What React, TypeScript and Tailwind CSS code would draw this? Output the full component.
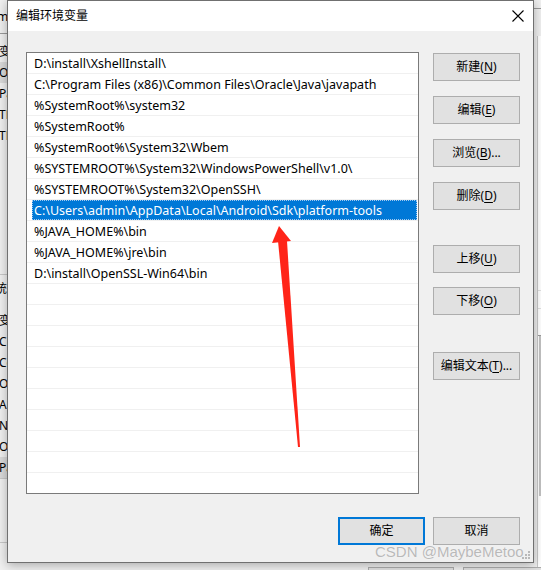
import React from "react";

const paths = [
  "D:\\install\\XshellInstall\\",
  "C:\\Program Files (x86)\\Common Files\\Oracle\\Java\\javapath",
  "%SystemRoot%\\system32",
  "%SystemRoot%",
  "%SystemRoot%\\System32\\Wbem",
  "%SYSTEMROOT%\\System32\\WindowsPowerShell\\v1.0\\",
  "%SYSTEMROOT%\\System32\\OpenSSH\\",
  "C:\\Users\\admin\\AppData\\Local\\Android\\Sdk\\platform-tools",
  "%JAVA_HOME%\\bin",
  "%JAVA_HOME%\\jre\\bin",
  "D:\\install\\OpenSSL-Win64\\bin",
];

const SELECTED = 7;
const TOTAL_ROWS = 21;

const Btn = ({ label, accel, tail, className = "" }: { label: string; accel?: string; tail?: string; className?: string }) => (
  <div
    className={
      "h-[28px] w-[87px] flex items-center justify-center bg-[#e1e1e1] border border-[#adadad] text-[12px] text-black " +
      className
    }
  >
    <span>{label}</span>
    {accel && (
      <span>
        (<span className="underline underline-offset-2">{accel}</span>){tail}
      </span>
    )}
  </div>
);

// window behind the dialog, only a few pixels of it show
const BackStrip = () => {
  const top = ["变", "Or", "Pa", "TE", "TM"];
  const bottom = ["变", "CL", "Co", "Or", "A", "NI", "OS", "Pa"];
  return (
    <div className="absolute left-0 top-0 w-[7px] h-full overflow-hidden flex flex-col text-[12px] text-black">
      <div className="h-[33px] leading-[33px] -ml-[3px]">m</div>
      <div className="h-px bg-[#9a9a9a]" />
      <div className="h-[7px]" />
      {top.map((t, i) => (
        <div key={i} className={"h-[21px] leading-[21px] -ml-[1px] " + (i === 1 ? "bg-[#dadada]" : "")}>
          {t}
        </div>
      ))}
      <div className="h-[128px]" />
      <div className="h-px bg-[#c8c8c8]" />
      <div className="h-[27px] leading-[27px] -ml-[5px]">统</div>
      <div className="h-[8px]" />
      {bottom.map((t, i) => (
        <div key={i} className={"h-[21px] leading-[21px] -ml-[1px] " + (i === 7 ? "bg-[#dadada]" : "")}>
          {t}
        </div>
      ))}
      <div className="h-px bg-[#c8c8c8]" />
      <div className="h-[63px]" />
      <div className="h-px bg-[#c8c8c8]" />
    </div>
  );
};

const RightStrip = () => (
  <div className="absolute right-0 top-0 w-[7px] h-full overflow-hidden flex flex-col">
    <div className="h-[8px]" />
    <div className="h-px bg-[#9a9a9a]" />
    <div className="h-[27px]" />
    <div className="flex-1 ml-[3px] border-l border-[#c8c8c8] bg-white flex flex-col">
      <div className="h-[236px]" />
      <div className="h-[19px] border-b border-[#e0e0e0]" />
      <div className="h-[18px] border-b border-[#e0e0e0]" />
      <div className="h-[27px] border-b border-[#9a9a9a]" />
      <div className="h-[160px] bg-[#c2c2c2] ml-[1px]" />
    </div>
  </div>
);

export default function App() {
  return (
    <div className="relative w-[541px] h-[570px] overflow-hidden bg-[#f0f0f0] font-['Noto_Sans','Noto_Sans_CJK_SC',sans-serif]">
      <BackStrip />
      <RightStrip />

      {/* buttons of the window behind */}
      <div className="absolute left-[368px] top-[567px] w-[86px] h-[10px] border border-[#adadad] bg-[#e1e1e1]" />
      <div className="absolute left-[463px] top-[567px] w-[90px] h-[10px] border border-[#adadad] bg-[#e1e1e1]" />

      {/* dialog */}
      <div className="absolute left-[7px] top-0 w-[527px] h-[563px] border border-[#707070] bg-[#f0f0f0] flex flex-col shadow-[0_2px_10px_rgba(0,0,0,0.3)]">
        <div className="h-[30px] bg-white flex items-center justify-between pl-[8px] pr-[8px]">
          <span className="text-[12px] text-black">编辑环境变量</span>
          <svg width="12" height="12" viewBox="0 0 12 12" className="mr-[1px]">
            <path d="M0.5 0.5 L11.5 11.5 M11.5 0.5 L0.5 11.5" stroke="#000" strokeWidth="1.1" />
          </svg>
        </div>

        <div className="flex-1 flex flex-col pl-[18px] pr-[13px] pt-[21px]">
          <div className="flex">
            <div className="w-[393px] h-[442px] border border-[#7a7a7a] bg-white overflow-hidden">
              {Array.from({ length: TOTAL_ROWS }).map((_, i) => {
                const text = paths[i];
                const sel = i === SELECTED;
                return (
                  <div key={i} className="h-[21px] border-b border-[#f0f0f0] flex">
                    {sel ? (
                      <div className="ml-[5px] w-[385px] h-full bg-[#0078d7] outline outline-1 outline-dotted outline-[#a3c9ef] -outline-offset-1 flex items-center pl-[2px] pt-[2px] text-[12.5px] text-white whitespace-nowrap">
                        {text}
                      </div>
                    ) : (
                      <div className="pl-[7px] pt-[2px] flex items-center text-[12.5px] text-black whitespace-nowrap">{text}</div>
                    )}
                  </div>
                );
              })}
            </div>

            <div className="ml-[14px] w-[87px] flex flex-col">
              <Btn label="新建" accel="N" className="mt-[1px]" />
              <Btn label="编辑" accel="E" className="mt-[15px]" />
              <Btn label="浏览" accel="B" tail="..." className="mt-[15px]" />
              <Btn label="删除" accel="D" className="mt-[15px]" />
              <Btn label="上移" accel="U" className="mt-[35px]" />
              <Btn label="下移" accel="O" className="mt-[14px]" />
              <Btn label="编辑文本" accel="T" tail="..." className="mt-[37px]" />
            </div>
          </div>

          <div className="flex justify-end mt-[23px]">
            <div className="h-[28px] w-[87px] flex items-center justify-center bg-[#e1e1e1] border-2 border-[#0078d7] text-[12px] text-black">
              确定
            </div>
            <Btn label="取消" className="ml-[8px]" />
          </div>
        </div>

        {/* resize grip */}
        <svg width="10" height="10" viewBox="0 0 10 10" className="absolute right-[2px] bottom-[2px]">
          {[
            [8, 2],
            [5, 5],
            [8, 5],
            [2, 8],
            [5, 8],
            [8, 8],
          ].map(([x, y], i) => (
            <rect key={i} x={x - 1} y={y - 1} width="2" height="2" fill="#b8b8b8" />
          ))}
        </svg>
      </div>

      {/* red arrow */}
      <svg className="absolute inset-0 pointer-events-none" width="541" height="570" viewBox="0 0 541 570">
        <polygon points="279,226 272,243 291,241" fill="#ff2418" />
        <polygon points="278,241 287,241 300,447 298,447" fill="#ff2418" />
      </svg>

      {/* watermark */}
      <div className="absolute left-[375px] top-[543px] text-[15px] leading-[18px] text-[#b9b9b9] font-['Liberation_Sans',sans-serif] [text-shadow:0_0_1px_rgba(255,255,255,0.9)] whitespace-nowrap">
        CSDN @MaybeMetoo
      </div>
    </div>
  );
}
